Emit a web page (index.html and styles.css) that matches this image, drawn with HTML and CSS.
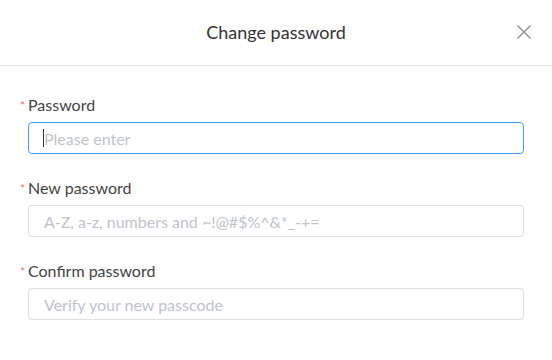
FILE: index.html
```html
<!DOCTYPE html>
<html lang="en">
<head>
<meta charset="utf-8">
<title>Change password</title>
<link rel="stylesheet" href="styles.css">
</head>
<body>
<div class="dialog">
  <header class="dialog-header">
    <h1 class="dialog-title">Change password</h1>
    <button class="dialog-close" aria-label="Close">
      <svg viewBox="0 0 16 16" width="16" height="16"><path d="M1.5 1.5 L14.5 14.5 M14.5 1.5 L1.5 14.5" stroke="#8c8c8c" stroke-width="1.3" fill="none"/></svg>
    </button>
  </header>
  <form class="dialog-body">
    <div class="form-item">
      <label class="form-label"><span class="req">*</span>Password</label>
      <div class="input-wrap">
        <input class="form-input is-focus" type="password" placeholder="Please enter" autofocus>
        <span class="caret"></span>
      </div>
    </div>
    <div class="form-item">
      <label class="form-label"><span class="req">*</span>New password</label>
      <input class="form-input" type="password" placeholder="A-Z, a-z, numbers and ~!@#$%^&amp;*_-+=">
    </div>
    <div class="form-item">
      <label class="form-label"><span class="req">*</span>Confirm password</label>
      <input class="form-input" type="password" placeholder="Verify your new passcode">
    </div>
  </form>
</div>
</body>
</html>
```
FILE: styles.css
```css
* { box-sizing: border-box; }
html, body { margin: 0; padding: 0; background: #fff; }
body { font-family: Lato, "Open Sans", sans-serif; color: #333; }
.dialog { width: 552px; height: 360px; background: #fff; }
.dialog-header {
  height: 66px;
  border-bottom: 1px solid #e8e8e8;
  display: flex;
  align-items: center;
  justify-content: center;
  position: relative;
}
.dialog-title {
  margin: 0 0 2px 0;
  font-size: 18px;
  font-weight: 400;
  color: #333;
  line-height: 24px;
}
.dialog-close {
  position: absolute;
  right: 20px;
  top: 24px;
  width: 16px;
  height: 16px;
  padding: 0;
  border: 0;
  background: none;
  display: flex;
}
.dialog-body {
  padding: 28px 28px 0 28px;
  display: flex;
  flex-direction: column;
  gap: 23px;
}
.form-item { display: flex; flex-direction: column; gap: 6px; }
.form-label {
  font-size: 16px;
  line-height: 22px;
  color: #444;
  position: relative;
}
.req {
  position: absolute;
  left: -8px;
  top: 1px;
  color: #f56c6c;
  font-size: 12px;
}
.input-wrap { position: relative; }
.caret {
  position: absolute;
  left: 15px;
  top: 7px;
  width: 1px;
  height: 18px;
  background: #333;
}
.form-input {
  height: 32px;
  width: 100%;
  border: 1px solid #dcdfe6;
  border-radius: 4px;
  padding: 0 15px;
  font-family: Lato, "Open Sans", sans-serif;
  font-size: 16px;
  color: #333;
  outline: none;
  background: #fff;
  caret-color: transparent;
}
.form-input::placeholder { color: #c0c4cc; }
.form-input.is-focus, .form-input:focus { border-color: #409eff; }
```
